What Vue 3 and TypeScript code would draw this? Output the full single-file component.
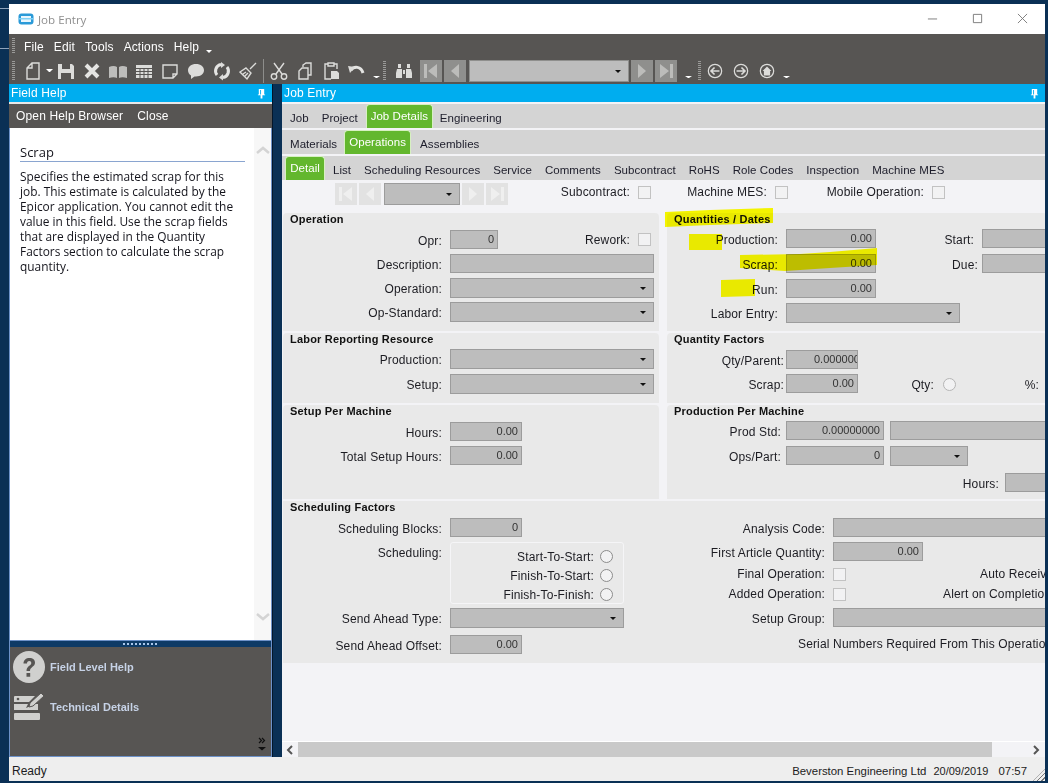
<script setup lang="ts">
// Job Entry window with the Field Help pane docked on the left
const helpText =
  'Specifies the estimated scrap for this job. This estimate is calculated by the Epicor application. You cannot edit the value in this field. Use the scrap fields that are displayed in the Quantity Factors section to calculate the scrap quantity.';

const menus = ['File', 'Edit', 'Tools', 'Actions', 'Help'];
const detailTabs = ['List', 'Scheduling Resources', 'Service', 'Comments', 'Subcontract', 'RoHS', 'Role Codes', 'Inspection', 'Machine MES'];
</script>

<template>
  <div class="desktop">
    <i class="wallpaper-line one"></i>
    <i class="wallpaper-line two"></i>
    <div class="window">
      <!-- Title bar -->
      <header class="titlebar">
        <svg class="app-icon" viewBox="0 0 16 12">
          <rect x="0.5" y="0.5" width="15" height="11" rx="3" fill="#2a9ad8" />
          <rect x="3" y="3" width="10" height="6" fill="#e8f6fd" />
          <rect x="0.5" y="5" width="15" height="1.5" fill="#7fd0f5" />
        </svg>
        <span class="title-text">Job Entry</span>
        <div class="win-controls">
          <svg viewBox="0 0 12 12"><path d="M1 6.5h10" /></svg>
          <svg viewBox="0 0 12 12"><path d="M1.5 1.5h9v9h-9z" /></svg>
          <svg viewBox="0 0 12 12"><path d="M1 1l10 10M11 1L1 11" /></svg>
        </div>
      </header>

      <!-- Menu and toolbar -->
      <section class="appbar">
        <div class="menu-row">
          <span class="grip"></span>
          <span v-for="m in menus" :key="m" class="menu-item">{{ m }}</span>
          <span class="mini-arrow menu-arrow"></span>
        </div>
        <div class="tool-row">
          <span class="grip tall"></span>
          <span class="tool">
            <svg viewBox="0 0 20 20"><path class="line" d="M4 7l5-5h7v16H4z M4 7h5V2" /></svg>
          </span>
          <span class="drop"></span>
          <span class="tool">
            <svg viewBox="0 0 20 20"><path d="M2 3h14l2 2v13H2z" /><path class="cut" d="M6 3h8v5H6zM5 12h10v6H5z" /></svg>
          </span>
          <span class="tool">
            <svg viewBox="0 0 20 20"><path class="thick" d="M4 4l12 12M16 4L4 16" /></svg>
          </span>
          <span class="tool dim">
            <svg viewBox="0 0 20 20"><path d="M1 6c3-1.500 6-1.500 8 0v11c-2-1-5-1-8 0zM19 6c-3-1.500-6-1.500-8 0v11c2-1 5-1 8 0z" /></svg>
          </span>
          <span class="tool">
            <svg viewBox="0 0 20 20"><path d="M2 4h16v13H2z" /><path class="cut-line" d="M2 7.500h16M2 10.500h16M2 13.500h16M6 7v10M10 7v10M14 7v10" /></svg>
          </span>
          <span class="tool">
            <svg viewBox="0 0 20 20"><path class="line" d="M3 4h14v9l-4 4H3z M17 13h-4v4" /></svg>
          </span>
          <span class="tool">
            <svg viewBox="0 0 20 20"><path d="M10 3c4.700 0 8 2.700 8 6.300s-3.300 6.200-8 6.200c-.6 0-1 0-1.500-.1L5 18v-3.600c-2-1.100-3-3-3-5.100C2 5.700 5.300 3 10 3z" /></svg>
          </span>
          <span class="tool">
            <svg viewBox="0 0 20 20"><path class="thick narrow" d="M5 14A6.500 6.500 0 0 1 9 3.500M15 6a6.500 6.500 0 0 1-4 10.500" /><path d="M9 1l4 3-4 3zM11 13l-4 3.500 4 3z" /></svg>
          </span>
          <span class="tool">
            <svg viewBox="0 0 20 20"><path class="line" d="M18 2l-6 6M8 7l5 5-4 6-7-7z M5 13l3-2M7 15l3-3" /></svg>
          </span>
          <span class="tool-sep"></span>
          <span class="tool">
            <svg viewBox="0 0 20 20"><path class="line" d="M5 2l8 11M15 2L7 13" /><circle class="line" cx="5" cy="15.500" r="2.700" /><circle class="line" cx="15" cy="15.500" r="2.700" /></svg>
          </span>
          <span class="tool">
            <svg viewBox="0 0 20 20"><path class="line" d="M8 6V4l3-2h5v12h-3M4 10l3-3h6v11H4z" /></svg>
          </span>
          <span class="tool">
            <svg viewBox="0 0 20 20"><path class="line" d="M7 3H4v15h6M13 3h3v5M7 2h6v3H7z" /><path d="M10 10h6l2 2v6h-8z" /></svg>
          </span>
          <span class="tool">
            <svg viewBox="0 0 20 20"><path class="thick narrow" d="M4 9c3-4 10-4 12 3" /><path d="M1 5l7 1-5 6z" /></svg>
          </span>
          <span class="drop small"></span>
          <span class="grip tall second"></span>
          <span class="tool">
            <svg viewBox="0 0 20 20"><path d="M3 8h5v9H2v-5zM12 8h5l1 4v5h-6zM4 3h3v4H4zM13 3h3v4h-3zM9 9h2v4H9z" /></svg>
          </span>
          <span class="nav-btn first">
            <svg viewBox="0 0 20 20"><path d="M3 3h3v14H3zM16 3v14L7 10z" /></svg>
          </span>
          <span class="nav-btn">
            <svg viewBox="0 0 20 20"><path d="M14 3v14L6 10z" /></svg>
          </span>
          <span class="top-combo"></span>
          <span class="nav-btn">
            <svg viewBox="0 0 20 20"><path d="M6 3v14l8-7z" /></svg>
          </span>
          <span class="nav-btn">
            <svg viewBox="0 0 20 20"><path d="M4 3v14l9-7zM14 3h3v14h-3z" /></svg>
          </span>
          <span class="drop small nav-drop"></span>
          <span class="grip tall third"></span>
          <span class="round">
            <svg viewBox="0 0 18 18"><circle class="line" cx="9" cy="9" r="7.500" /><path class="line bold" d="M14 9H5M8.500 5L4.500 9l4 4" /></svg>
          </span>
          <span class="round">
            <svg viewBox="0 0 18 18"><circle class="line" cx="9" cy="9" r="7.500" /><path class="line bold" d="M4 9h9M9.500 5l4 4-4 4" /></svg>
          </span>
          <span class="round">
            <svg viewBox="0 0 18 18"><circle class="line" cx="9" cy="9" r="7.500" /><path d="M9 4l5 5h-1.500v5h-7V9H4z" /></svg>
          </span>
          <span class="drop small end-drop"></span>
        </div>
      </section>

      <div class="panes">
        <!-- Field Help pane -->
        <aside class="help-pane">
          <div class="pane-head">
            <span>Field Help</span>
            <svg class="pin" viewBox="0 0 10 12"><path d="M2 1h6v6h1v1H6v3.500H4V8H1V7h1zM3.500 2v5h1V2z" /></svg>
          </div>
          <div class="help-actions">
            <span>Open Help Browser</span>
            <span>Close</span>
          </div>
          <div class="help-body">
            <div class="help-text">
              <h3>Scrap</h3>
              <p>{{ helpText }}</p>
            </div>
            <div class="help-scroll">
              <svg viewBox="0 0 14 8"><path d="M1 7l6-5 6 5" /></svg>
              <svg viewBox="0 0 14 8"><path d="M1 1l6 5 6-5" /></svg>
            </div>
          </div>
          <div class="help-splitter"><span></span></div>
          <div class="help-links">
            <div class="help-link first">
              <svg class="q-icon" viewBox="0 0 32 32">
                <circle cx="16" cy="16" r="16" fill="#d0d0ce" />
                <path d="M10.500 12.500c0-3.500 2.500-5.500 6-5.500s5.500 2 5.500 4.800c0 4-5 4.200-5 8.200h-3.500c0-5.200 4.800-5.200 4.800-8 0-1.200-.8-2-2-2-1.500 0-2.300 1-2.300 2.500zM13.500 22h3.700v3.700h-3.700z" fill="#575553" />
              </svg>
              <span>Field Level Help</span>
            </div>
            <div class="help-link second">
              <svg class="q-icon wide" viewBox="0 0 32 30">
                <path d="M1 5a1 1 0 0 1 1-1h20l-6 6H1z M1 12h14l-2 4 5-2 2-2h5v6H1z M2 21h24a1 1 0 0 1 1 1v5a1 1 0 0 1-1 1H2a1 1 0 0 1-1-1v-5a1 1 0 0 1 1-1z" fill="#d0d0ce" />
                <circle cx="5" cy="7" r="1.300" fill="#575553" />
                <path d="M17 11l11-10 3 3-11 10-4 1z" fill="#d0d0ce" stroke="#575553" stroke-width="1" />
              </svg>
              <span>Technical Details</span>
            </div>
            <div class="more">
              <svg viewBox="0 0 8 14"><path d="M1 1l2.500 2.500L1 6M4 1l2.500 2.500L4 6" /><path class="solid" d="M0 10h8l-4 3.500z" /></svg>
            </div>
          </div>
        </aside>

        <!-- Job Entry pane -->
        <main class="job-pane">
          <div class="pane-head">
            <span>Job Entry</span>
            <svg class="pin" viewBox="0 0 10 12"><path d="M2 1h6v6h1v1H6v3.500H4V8H1V7h1zM3.500 2v5h1V2z" /></svg>
          </div>
          <div class="tabs first-tabs">
            <span class="tab t-job">Job</span>
            <span class="tab t-project">Project</span>
            <span class="tab active t-jobdetails">Job Details</span>
            <span class="tab t-eng">Engineering</span>
          </div>
          <div class="tabs second-tabs">
            <span class="tab t-mat">Materials</span>
            <span class="tab active t-ops">Operations</span>
            <span class="tab t-asm">Assemblies</span>
          </div>
          <div class="tabs third-tabs">
            <span class="tab active t-detail">Detail</span>
            <span v-for="t in detailTabs" :key="t" class="tab detail-tab">{{ t }}</span>
          </div>

          <div class="form">
            <div class="record-nav">
              <span class="rec-btn"><svg viewBox="0 0 20 20"><path d="M3 3h3v14H3zM16 3v14L7 10z" /></svg></span>
              <span class="rec-btn"><svg viewBox="0 0 20 20"><path d="M14 3v14L6 10z" /></svg></span>
              <span class="field select rec-combo"></span>
              <span class="rec-btn"><svg viewBox="0 0 20 20"><path d="M6 3v14l8-7z" /></svg></span>
              <span class="rec-btn"><svg viewBox="0 0 20 20"><path d="M4 3v14l9-7zM14 3h3v14h-3z" /></svg></span>
              <span class="txt n-sub">Subcontract:</span><span class="check"></span>
              <span class="txt n-mes">Machine MES:</span><span class="check"></span>
              <span class="txt n-mob">Mobile Operation:</span><span class="check"></span>
            </div>

            <div class="groups">
              <section class="group">
                <h4>Operation</h4>
                <div class="row h24 mt1">
                  <label class="lbl l">Opr:</label><span class="field w48">0</span>
                  <span class="txt rework">Rework:</span><span class="check"></span>
                </div>
                <div class="row h24"><label class="lbl l">Description:</label><span class="field w204"></span></div>
                <div class="row h24"><label class="lbl l">Operation:</label><span class="field select w204"></span></div>
                <div class="row h24"><label class="lbl l">Op-Standard:</label><span class="field select w204"></span></div>
              </section>

              <section class="group">
                <h4 class="q-title">Quantities / Dates</h4>
                <div class="row h25">
                  <label class="lbl r">Production:</label><span class="field w90">0.00</span>
                  <span class="txt start">Start:</span><span class="field w90 clip"></span>
                </div>
                <div class="row h25">
                  <label class="lbl r">Scrap:</label><span class="field w90">0.00</span>
                  <span class="txt due">Due:</span><span class="field w90 clip"></span>
                </div>
                <div class="row h24"><label class="lbl r">Run:</label><span class="field w90">0.00</span></div>
                <div class="row h24"><label class="lbl r">Labor Entry:</label><span class="field select w174"></span></div>
              </section>

              <section class="group">
                <h4>Labor Reporting Resource</h4>
                <div class="row h25"><label class="lbl l">Production:</label><span class="field select w204"></span></div>
                <div class="row h25"><label class="lbl l">Setup:</label><span class="field select w204"></span></div>
              </section>

              <section class="group">
                <h4>Quantity Factors</h4>
                <div class="row h24 mt1"><label class="lbl r near">Qty/Parent:</label><span class="field w72 left-clip">0.00000000</span></div>
                <div class="row h24">
                  <label class="lbl r near">Scrap:</label><span class="field w72">0.00</span>
                  <span class="txt qty">Qty:</span><span class="radio qty-radio"></span>
                  <span class="txt pct">%:</span>
                </div>
              </section>

              <section class="group">
                <h4>Setup Per Machine</h4>
                <div class="row h24 mt1"><label class="lbl l">Hours:</label><span class="field w72">0.00</span></div>
                <div class="row h24"><label class="lbl l">Total Setup Hours:</label><span class="field w72">0.00</span></div>
              </section>

              <section class="group">
                <h4>Production Per Machine</h4>
                <div class="row h25">
                  <label class="lbl r mid">Prod Std:</label><span class="field w98">0.00000000</span>
                  <span class="field w160 clip next"></span>
                </div>
                <div class="row h27">
                  <label class="lbl r mid">Ops/Part:</label><span class="field w98">0</span>
                  <span class="field select w78 next"></span>
                </div>
                <div class="row h24">
                  <label class="lbl hours">Hours:</label><span class="field w60 clip"></span>
                </div>
              </section>

              <section class="group wide sched">
                <h4>Scheduling Factors</h4>
                <div class="sched-cols">
                  <div class="sched-left">
                    <div class="row h24 mt1"><label class="lbl l">Scheduling Blocks:</label><span class="field w72">0</span></div>
                    <div class="row h66">
                      <label class="lbl l">Scheduling:</label>
                      <div class="radio-box">
                        <div class="radio-row"><span>Start-To-Start:</span><span class="radio"></span></div>
                        <div class="radio-row"><span>Finish-To-Start:</span><span class="radio"></span></div>
                        <div class="radio-row"><span>Finish-To-Finish:</span><span class="radio"></span></div>
                      </div>
                    </div>
                    <div class="row h27"><label class="lbl l">Send Ahead Type:</label><span class="field select w174"></span></div>
                    <div class="row h24"><label class="lbl l">Send Ahead Offset:</label><span class="field w72">0.00</span></div>
                  </div>
                  <div class="sched-right">
                    <div class="row h24 mt1"><label class="lbl s">Analysis Code:</label><span class="field w230 clip"></span></div>
                    <div class="row h26"><label class="lbl s">First Article Quantity:</label><span class="field w90">0.00</span></div>
                    <div class="row h20">
                      <label class="lbl s">Final Operation:</label><span class="check flat"></span>
                      <span class="txt auto">Auto Receive</span>
                    </div>
                    <div class="row h20">
                      <label class="lbl s">Added Operation:</label><span class="check flat"></span>
                      <span class="txt alert">Alert on Completion</span>
                    </div>
                    <div class="row h28"><label class="lbl s">Setup Group:</label><span class="field w230 clip"></span></div>
                    <div class="row"><span class="txt serial">Serial Numbers Required From This Operation</span></div>
                  </div>
                </div>
              </section>
            </div>
          </div>

          <div class="hscroll">
            <svg viewBox="0 0 8 10"><path d="M6 1L2 5l4 4" /></svg>
            <span class="hthumb"></span>
            <svg class="r-arrow" viewBox="0 0 8 10"><path d="M2 1l4 4-4 4" /></svg>
          </div>

          <!-- Marker strokes someone drew over the screenshot -->
          <svg class="marker" viewBox="282 84 766 300">
            <polygon points="665,212 710,210 773,208 773,223 710,225 665,227" />
            <polygon points="689,234 722,234 722,250 689,250" />
            <polygon points="740,255 800,254 830,252 877,248 877,265 830,268 785,271 740,268" />
            <polygon points="721,280 755,279 755,296 721,297" />
          </svg>
        </main>
      </div>

      <footer class="status">
        <span class="ready">Ready</span>
        <span class="company">Beverston Engineering Ltd</span>
        <span class="date">20/09/2019</span>
        <span class="time">07:57</span>
        <i class="resize"></i>
      </footer>
    </div>
  </div>
</template>

<style>
html, body { margin: 0; height: 100%; overflow: hidden; }
</style>

<style scoped>
.desktop {
  position: relative;
  width: 1048px;
  height: 783px;
  padding: 4px 3px 2px 9px;
  box-sizing: border-box;
  background: #0a3055;
  font-family: "Liberation Sans", Arial, sans-serif;
  font-size: 12px;
  letter-spacing: 0.15px;
  color: #1c1c22;
  overflow: hidden;
}
.wallpaper-line { position: absolute; left: 0; width: 9px; height: 1px; background: #8ea3bb; }
.wallpaper-line.one { top: 8px; }
.wallpaper-line.two { top: 48px; }

.window { height: 777px; display: flex; flex-direction: column; overflow: hidden; }

/* title bar */
.titlebar { height: 30px; flex: none; background: #fff; display: flex; align-items: center; padding-left: 9px; box-sizing: border-box; }
.app-icon { width: 16px; height: 12px; }
.title-text { margin-left: 4px; font-family: "Open Sans", sans-serif; font-size: 11.600px; letter-spacing: 0; color: #8f8f8f; }
.win-controls { margin-left: auto; display: flex; gap: 34px; padding-right: 17px; margin-top: -1px; }
.win-controls svg { width: 11px; height: 11px; fill: none; stroke: #777; stroke-width: 1; }

/* menu + toolbar */
.appbar { height: 50px; flex: none; background: #575553; color: #fff; }
.menu-row { height: 23px; display: flex; align-items: center; padding-left: 3px; gap: 10px; letter-spacing: 0.12px; }
.menu-row .grip { margin-right: -1px; }
.menu-item { line-height: 23px; margin-top: 3px; }
.grip { width: 3px; height: 16px; flex: none; background: repeating-linear-gradient(#9a9a98 0 1px, transparent 1px 2px); }
.grip.tall { height: 20px; }
.grip.second { margin: 0 5px 0 3px; }
.grip.third { margin: 0 6px 0 6px; }
.mini-arrow { width: 0; height: 0; border: 3px solid transparent; border-top: 3px solid #fff; border-bottom: 0; }
.menu-arrow { margin: 12px 0 0 -3px; }

.tool-row { height: 27px; display: flex; align-items: center; padding-left: 3px; }
.tool { width: 26px; height: 20px; flex: none; display: flex; justify-content: center; }
.tool-row > .grip:first-child { margin-right: 5px; }
.tool svg { width: 20px; height: 20px; fill: #dcdcda; }
.tool.dim svg { fill: #bdbdbb; }
.line { fill: none; stroke: #dcdcda; stroke-width: 1.4; }
.line.bold { stroke-width: 1.8; }
.cut { fill: #575553; }
.cut-line { stroke: #575553; stroke-width: 1; fill: none; }
.thick { fill: none; stroke: #e4e4e2; stroke-width: 4; }
.thick.narrow { stroke-width: 3; }
.drop { width: 7px; height: 0; flex: none; border-top: 3px solid #fff; border-left: 3.500px solid transparent; border-right: 3.500px solid transparent; box-sizing: border-box; }
.drop.small { margin: 12px 0 0 3px; border-top-width: 2px; }
.nav-drop { margin-left: 6px !important; }
.end-drop { margin-left: -2px !important; }
.tool-sep { width: 1px; height: 24px; flex: none; margin: 0 2px 0 2px; background: #8d8d8b; }
.nav-btn { width: 22px; height: 22px; flex: none; margin-right: 2px; background: #8f8f8d; display: flex; align-items: center; justify-content: center; }
.nav-btn.first { margin-left: 3px; }
.nav-btn svg { width: 20px; height: 20px; fill: #bcbcba; }
.top-combo { width: 160px; height: 22px; flex: none; box-sizing: border-box; margin: 0 2px 0 1px; border: 1px solid #8f8f8d; background: #bdbdbd; position: relative; }
.top-combo::after { content: ""; position: absolute; right: 7px; top: 9px; border-top: 3px solid #111; border-left: 3px solid transparent; border-right: 3px solid transparent; }
.round { width: 16px; height: 16px; flex: none; margin-right: 10px; display: flex; }
.round svg { width: 16px; height: 16px; fill: #dcdcda; }

/* panes */
.panes { flex: 1; display: flex; min-height: 0; background: #0a3055; }
.pane-head { height: 18px; flex: none; background: #00adef; color: #fff; display: flex; align-items: center; justify-content: space-between; padding: 0 6px 0 2px; font-size: 12px; }
.pin { width: 9px; height: 11px; fill: #fff; }

.help-pane { width: 263px; flex: none; display: flex; flex-direction: column; margin-right: 10px; box-shadow: 1px 0 0 #03162a; }
.help-actions { height: 24px; flex: none; margin-top: 2px; background: #575553; color: #fff; display: flex; align-items: center; gap: 14px; padding-left: 7px; box-shadow: 0 -2px 0 #e8e8e8; letter-spacing: 0.15px; }
.help-body { flex: 1; min-height: 0; display: flex; background: #fff; border-left: 1px solid #6d92c9; border-right: 1px solid #6d92c9; }
.help-text { flex: 1; padding: 15px 0 0 10px; font-family: "Open Sans", sans-serif; letter-spacing: 0; color: #14141c; }
.help-text h3 { margin: 0 9px 0 0; font-size: 13px; font-weight: 400; line-height: 18px; border-bottom: 1px solid #8aa5d0; }
.help-text p { margin: 7px 0 0; font-size: 11.900px; line-height: 15px; width: 226px; }
.help-scroll { width: 17px; flex: none; background: #f7f7f7; display: flex; flex-direction: column; justify-content: space-between; padding: 18px 0 19px; box-sizing: border-box; align-items: center; }
.help-scroll svg { width: 14px; height: 8px; fill: none; stroke: #d4d4d4; stroke-width: 2.500; }
.help-splitter { height: 7px; flex: none; background: #0d3a66; border: 1px solid #6d92c9; border-width: 1px 1px 0; box-sizing: border-box; display: flex; justify-content: center; align-items: center; }
.help-splitter span { width: 36px; height: 2px; background: repeating-linear-gradient(90deg, #a9c6ea 0 2px, transparent 2px 4px); }
.help-links { height: 110px; flex: none; box-sizing: border-box; background: #575553; border: 1px solid #6d92c9; border-top: 0; position: relative; padding: 4px 0 0 3px; }
.help-link { display: flex; align-items: center; gap: 5px; font-size: 11px; font-weight: 700; color: #c6d2e6; letter-spacing: 0; }
.help-link.second { margin-top: 9px; }
.q-icon { width: 32px; height: 32px; flex: none; }
.q-icon.wide { height: 30px; }
.more { position: absolute; right: 5px; bottom: 5px; }
.more svg { display: block; width: 8px; height: 14px; fill: none; stroke: #111; stroke-width: 1.200; }
.more .solid { fill: #111; stroke: none; }

.job-pane { flex: 1; min-width: 0; position: relative; display: flex; flex-direction: column; background: #f3f3f6; overflow: hidden; }

/* tab strips */
.tabs { flex: none; height: 24px; margin-top: 2px; background: #d4d4d4; position: relative; display: flex; align-items: flex-end; box-sizing: border-box; font-size: 11.500px; letter-spacing: 0.05px; }
.tab { padding-bottom: 2px; line-height: 16px; white-space: nowrap; color: #1c1c2a; }
.tab.active { height: 24px; box-sizing: border-box; padding: 3px 0 0; background: #63b72e; color: #fff; border: 1px solid #d7f0c2; border-bottom: 0; border-radius: 4px 4px 0 0; text-align: center; }
.t-job { margin-left: 8px; }
.t-project { margin-left: 13px; }
.t-jobdetails { margin-left: 8px; width: 67px; }
.t-eng { margin-left: 7px; }
.t-mat { margin-left: 8px; }
.t-ops { margin-left: 7px; width: 67px; }
.t-asm { margin-left: 9px; }
.t-detail { margin-left: 3px; width: 40px; }
.detail-tab { margin-left: 13px; }
.t-detail + .detail-tab { margin-left: 8px; }

/* form */
.form { flex: 1; min-height: 0; overflow: hidden; }
.record-nav { height: 33px; box-sizing: border-box; padding: 3px 0 0 53px; display: flex; align-items: flex-start; }
.rec-btn { width: 22px; height: 22px; flex: none; margin-right: 2px; background: #e2e2e2; display: flex; align-items: center; justify-content: center; }
.rec-btn svg { width: 20px; height: 20px; fill: #efefef; }
.rec-combo { width: 76px; height: 22px; margin: 0 2px 0 1px; }
.txt { white-space: nowrap; line-height: 19px; flex: none; text-align: right; box-sizing: border-box; }
.n-sub { width: 120px; margin-right: 8px; }
.n-mes { width: 116px; margin-right: 8px; }
.n-mob { width: 136px; margin-right: 8px; }

.groups { display: grid; grid-template-columns: 376px 380px; column-gap: 8px; row-gap: 2px; grid-template-rows: 118px 70px 94px 162px; padding-left: 1px; }
.group { background: #e9e9e9; border-radius: 4px 4px 0 0; overflow: hidden; }
.group.wide { grid-column: 1 / 3; border-radius: 0; }
.group h4 { margin: 0; height: 16px; padding-left: 7px; font-size: 11px; font-weight: 700; line-height: 13px; letter-spacing: 0.2px; color: #111; }

.row { display: flex; align-items: flex-start; }
.h20 { height: 20px; }
.h24 { height: 24px; }
.h25 { height: 25px; }
.h26 { height: 26px; }
.h27 { height: 27px; }
.h28 { height: 28px; }
.h66 { height: 66px; }
.mt1 { margin-top: 1px; }

.lbl { flex: none; text-align: right; white-space: nowrap; line-height: 22px; box-sizing: border-box; margin-right: 8px; }
.lbl.l { width: 159px; }
.lbl.r { width: 111px; }
.lbl.near { width: 117px; margin-right: 2px; }
.lbl.mid { width: 114px; margin-right: 5px; }
.lbl.s { width: 158px; }
.lbl.hours { width: 332px; margin-right: 6px; }

.field { display: block; flex: none; height: 19px; box-sizing: border-box; background: #bdbdbd; border: 1px solid #9c9c9c; text-align: right; padding-right: 3px; font-size: 11px; letter-spacing: 0; line-height: 16px; color: #333; position: relative; white-space: nowrap; overflow: hidden; }
.field.select { height: 20px; }
.field.select::after { content: ""; position: absolute; right: 7px; top: 8px; border-top: 3px solid #111; border-left: 3px solid transparent; border-right: 3px solid transparent; }
.rec-combo.select { height: 22px; }
.rec-combo.select::after { top: 9px; }
.w48 { width: 48px; }
.w60 { width: 60px; }
.w72 { width: 72px; }
.w78 { width: 78px; }
.w90 { width: 90px; }
.w98 { width: 98px; }
.w160 { width: 165px; }
.w174 { width: 174px; }
.w204 { width: 204px; }
.w230 { width: 230px; }
.clip { border-right: 0; }
.next { margin-left: 6px; }
.left-clip { text-align: left; padding-left: 27px; padding-right: 0; }

.check { width: 13px; height: 13px; flex: none; box-sizing: border-box; margin-top: 3px; background: #f2f2f3; border: 1px solid #c2c2c2; }
.check.flat { margin-top: 0; }
.radio { width: 13px; height: 13px; flex: none; box-sizing: border-box; border-radius: 50%; background: #f2f2f3; border: 1px solid #8c8c8c; }

.rework { width: 132px; margin: 1px 8px 0 0; }
.start { width: 98px; margin: 2px 8px 0 0; }
.due { width: 102px; margin: 2px 4px 0 0; }
.qty { width: 76px; margin-top: 2px; }
.qty-radio { margin: 4px 0 0 9px; border-color: #b5b5b5; }
.pct { width: 83px; margin-top: 2px; }
.auto { margin-left: 134px; line-height: 12px; }
.alert { margin-left: 97px; line-height: 12px; }
.serial { margin-left: 131px; line-height: 16px; }
.sched-right .h20 .lbl { line-height: 12px; }

.sched-cols { display: flex; }
.sched-left { width: 384px; flex: none; }
.sched-right { flex: 1; min-width: 0; }
.radio-box { width: 174px; height: 62px; box-sizing: border-box; border: 1px solid #f5f5f7; border-radius: 3px; padding: 4px 10px 0 0; }
.radio-row { display: flex; height: 19px; justify-content: flex-end; align-items: center; gap: 6px; }

/* horizontal scroller */
.hscroll { height: 15px; flex: none; display: flex; align-items: center; padding-left: 4px; position: relative; box-shadow: 0 -1px 0 #fff; }
.hscroll svg { width: 8px; height: 10px; fill: none; stroke: #555; stroke-width: 2; flex: none; }
.hthumb { position: absolute; left: 16px; width: 694px; top: 0; bottom: 0; background: #c9c9c9; }
.r-arrow { position: absolute; right: 5px; }

.marker { position: absolute; left: 0; top: 0; width: 766px; height: 300px; pointer-events: none; mix-blend-mode: multiply; }
.marker polygon { fill: #ffff00; }

/* status bar */
.status { height: 24px; flex: none; box-sizing: border-box; padding-top: 3px; background: #eeeeee; display: flex; align-items: center; position: relative; font-size: 11.400px; letter-spacing: 0; }
.ready { margin-left: 3px; font-size: 12px; }
.company { margin-left: auto; }
.date { margin-left: 7px; font-size: 11px; }
.time { margin: 0 18px 0 10px; }
.resize { position: absolute; right: 0; bottom: 0; width: 12px; height: 12px; background: repeating-linear-gradient(135deg, transparent 0 2px, #777 2px 3px); clip-path: polygon(100% 0, 100% 100%, 0 100%); }
</style>
